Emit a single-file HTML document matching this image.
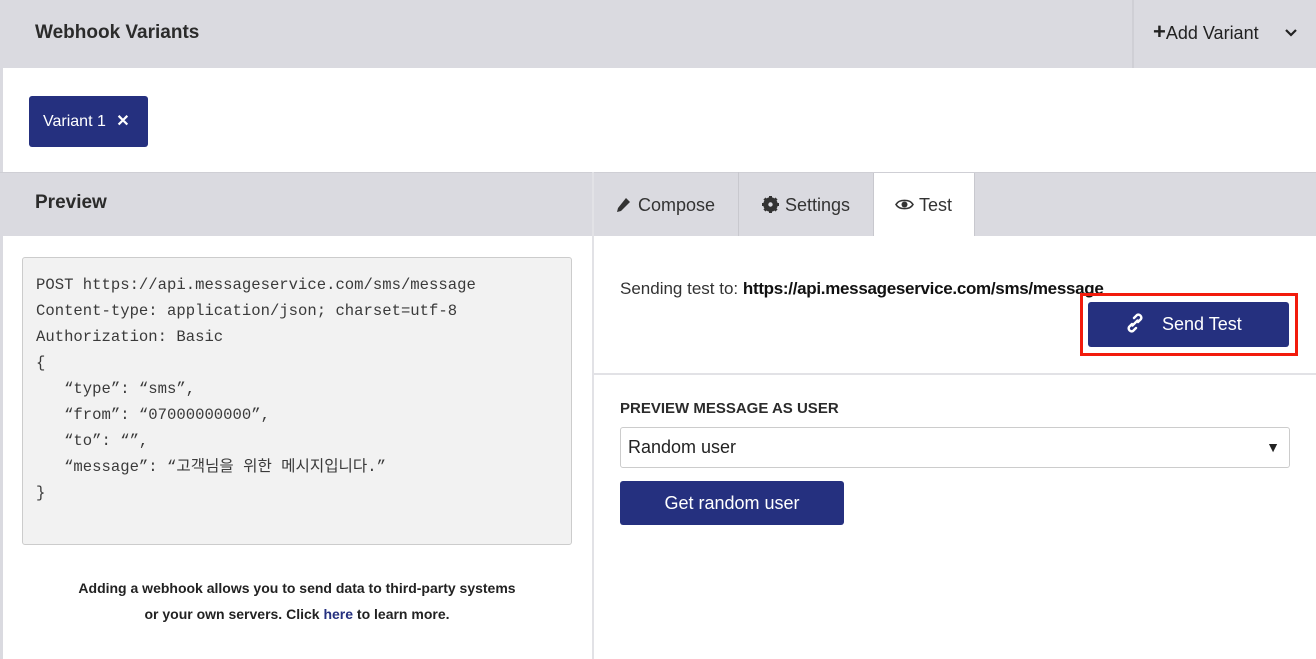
<!DOCTYPE html>
<html><head><meta charset="utf-8"><style>
*{margin:0;padding:0;box-sizing:border-box}
body{width:1316px;height:659px;overflow:hidden;background:#fff;font-family:"Liberation Sans","Noto Sans CJK KR",sans-serif;color:#222;position:relative}
.a{position:absolute}
.nav{background:#25307f;color:#fff;border-radius:3px}
</style></head><body>
<div class="a" style="left:0;top:0;width:1316px;height:68px;background:#dadae0"></div>
<div class="a" style="left:0;top:0;width:3px;height:659px;background:#dadae0"></div>
<div class="a" style="left:35px;top:22px;font-size:19px;font-weight:bold;color:#2b2b2b">Webhook Variants</div>
<div class="a" style="left:1132px;top:0;width:2px;height:68px;background:#cfcfd5"></div>
<div class="a" style="left:1153px;top:23px;font-size:18px;color:#222"><b style="font-size:22px;line-height:18px">+</b>Add Variant</div>
<svg class="a" style="left:1284px;top:28px" width="14" height="10" viewBox="0 0 14 10"><path d="M2 2l5 5 5-5" fill="none" stroke="#222" stroke-width="2.2"/></svg>
<div class="a nav" style="left:29px;top:96px;width:119px;height:51px;font-size:16px;line-height:51px;padding-left:14px">Variant 1 <b style="margin-left:6px">✕</b></div>
<div class="a" style="left:0;top:172px;width:1316px;height:64px;background:#dadae0;border-top:1px solid #cfcfd5"></div>
<div class="a" style="left:35px;top:192px;font-size:19px;font-weight:bold;color:#2b2b2b">Preview</div>
<div class="a" style="left:592px;top:172px;width:2px;height:487px;background:#e2e2e6"></div>
<div class="a" style="left:738px;top:172px;width:1px;height:64px;background:#c8c8ce"></div>
<div class="a" style="left:873px;top:173px;width:102px;height:63px;background:#fff;border-left:1px solid #c8c8ce;border-right:1px solid #c8c8ce"></div>
<svg class="a" style="left:614px;top:196px" width="18" height="18" viewBox="0 0 18 18"><path d="M12 2l4 4-9 9-4 1 1-4z" fill="#333"/></svg>
<div class="a" style="left:638px;top:195px;font-size:18px;color:#333">Compose</div>
<svg class="a" style="left:762px;top:196px" width="17" height="17" viewBox="0 0 17 17"><circle cx="8.5" cy="8.5" r="5.5" fill="none" stroke="#333" stroke-width="3.5"/><path d="M8.5 0v17M0 8.5h17M2.5 2.5l12 12M14.5 2.5l-12 12" stroke="#333" stroke-width="3"/><circle cx="8.5" cy="8.5" r="2.2" fill="#dadae0"/></svg>
<div class="a" style="left:785px;top:195px;font-size:18px;color:#333">Settings</div>
<svg class="a" style="left:895px;top:197px" width="19" height="15" viewBox="0 0 19 15"><path d="M1 7.5C4 2 15 2 18 7.5 15 13 4 13 1 7.5z" fill="none" stroke="#333" stroke-width="1.6"/><circle cx="9.5" cy="7.5" r="3" fill="#333"/></svg>
<div class="a" style="left:919px;top:195px;font-size:18px;color:#333">Test</div>
<div class="a" style="left:22px;top:257px;width:550px;height:288px;background:#f2f2f2;border:1px solid #ccc;border-radius:3px"></div>
<pre class="a" style="left:36px;top:272px;font-family:'Liberation Mono','Noto Sans CJK KR',monospace;font-size:15.6px;line-height:26px;color:#3a3a3a">POST https://api.messageservice.com/sms/message
Content-type: application/json; charset=utf-8
Authorization: Basic
{
   “type”: “sms”,
   “from”: “07000000000”,
   “to”: “”,
   “message”: “고객님을 위한 메시지입니다.”
}</pre>
<div class="a" style="left:22px;top:575px;width:550px;text-align:center;font-size:14px;font-weight:bold;line-height:26px;color:#222">Adding a webhook allows you to send data to third-party systems<br>or your own servers. Click <span style="color:#25307f">here</span> to learn more.</div>
<div class="a" style="left:620px;top:279px;font-size:17px;color:#333">Sending test to: <span style="color:#111;font-weight:bold;letter-spacing:-0.3px">https://api.messageservice.com/sms/message</span></div>
<div class="a" style="left:1080px;top:293px;width:218px;height:63px;border:3px solid #f21b0c"></div>
<div class="a nav" style="left:1088px;top:302px;width:201px;height:45px;font-size:18px;line-height:45px;padding-left:74px">Send Test</div>
<svg class="a" style="left:1126px;top:313px" width="18" height="20" viewBox="0 0 18 20"><path d="M8 5l3-3a3 3 0 0 1 4 4l-3 3M10 15l-3 3a3 3 0 0 1-4-4l3-3M6.5 12.5l5-5" fill="none" stroke="#fff" stroke-width="2.4" stroke-linecap="round"/></svg>
<div class="a" style="left:594px;top:373px;width:722px;height:2px;background:#e2e2e6"></div>
<div class="a" style="left:620px;top:400px;font-size:15px;font-weight:bold;color:#2b2b2b">PREVIEW MESSAGE AS USER</div>
<div class="a" style="left:620px;top:427px;width:670px;height:41px;border:1px solid #ccc;border-radius:3px;font-size:18px;line-height:39px;padding-left:7px">Random user<span style="position:absolute;right:9px;top:0;font-size:14px">▼</span></div>
<div class="a nav" style="left:620px;top:481px;width:224px;height:44px;font-size:18px;line-height:44px;text-align:center">Get random user</div>
</body></html>
